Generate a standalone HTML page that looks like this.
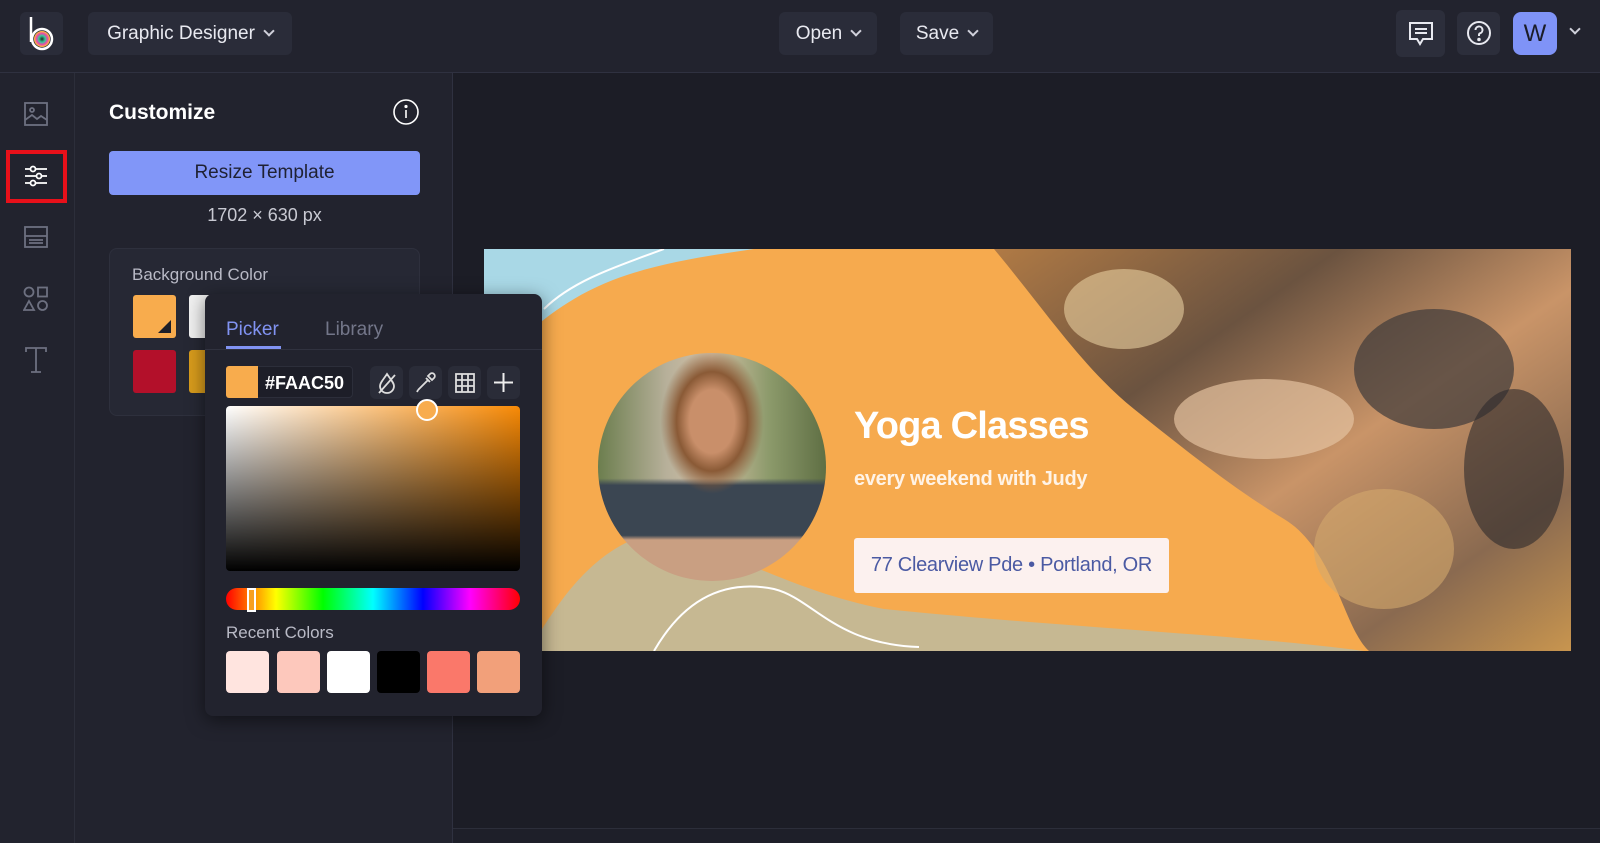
<!DOCTYPE html>
<html><head><meta charset="utf-8"><style>
*{box-sizing:border-box;margin:0;padding:0}
body{width:1600px;height:843px;background:#1c1d26;font-family:"Liberation Sans",sans-serif;position:relative;overflow:hidden;color:#e6e7ee}
.a{position:absolute}
.btn{position:absolute;background:#2a2c39;border-radius:6px;color:#e8e9f0;font-size:19px;display:flex;align-items:center;justify-content:center;gap:10px}
.chev{width:8px;height:8px;border-right:2px solid #cfd0da;border-bottom:2px solid #cfd0da;transform:rotate(45deg);margin-top:-5px}
.ib{position:absolute;background:#2c2e3b;border-radius:6px}
.rs{position:absolute;top:651px;width:43px;height:42px;border-radius:4px}
</style></head><body>
<div class="a" style="left:0;top:0;width:1600px;height:73px;background:#22232e;border-bottom:1px solid #2f3140"></div>
<div class="a" style="left:20px;top:12px;width:43px;height:43px;background:#2a2c39;border-radius:6px"></div>
<svg class="a" style="left:24px;top:14px" width="36" height="38" viewBox="0 0 36 38"><path d="M7 3V28" stroke="#fff" stroke-width="2.5"/><circle cx="18" cy="25" r="10" fill="none" stroke="#fff" stroke-width="2.5"/><circle cx="18" cy="25" r="8" fill="url(#g)"/><defs><radialGradient id="g"><stop offset="0" stop-color="#222"/><stop offset=".4" stop-color="#3c9"/><stop offset=".7" stop-color="#e4a"/><stop offset="1" stop-color="#fc3"/></radialGradient></defs></svg>
<div class="btn" style="left:88px;top:12px;width:204px;height:43px">Graphic Designer <span class="chev"></span></div>
<div class="btn" style="left:779px;top:12px;width:98px;height:43px">Open <span class="chev"></span></div>
<div class="btn" style="left:900px;top:12px;width:93px;height:43px">Save <span class="chev"></span></div>
<div class="ib" style="left:1396px;top:10px;width:49px;height:47px"></div>
<svg class="a" style="left:1408px;top:21px" width="26" height="26" viewBox="0 0 26 26" fill="none" stroke="#e8e9f0" stroke-width="2"><path d="M2 2H24V18H15L12 23L9 18H2Z"/><path d="M7 8H19M7 12H19"/></svg>
<div class="ib" style="left:1457px;top:12px;width:43px;height:43px"></div>
<svg class="a" style="left:1466px;top:20px" width="26" height="26" viewBox="0 0 26 26" fill="none" stroke="#e8e9f0" stroke-width="2"><circle cx="13" cy="13" r="11"/><path d="M9.5 10a3.5 3.5 0 1 1 4.5 3.3c-.8.3-1 .9-1 1.7v1"/><circle cx="13" cy="19.5" r=".8" fill="#e8e9f0"/></svg>
<div class="a" style="left:1513px;top:12px;width:44px;height:43px;background:#7f93f7;border-radius:8px;color:#1b1c28;font-size:24px;display:flex;align-items:center;justify-content:center">W</div>
<div class="chev a" style="left:1571px;top:30px"></div>
<div class="a" style="left:0;top:73px;width:75px;height:770px;background:#22232e;border-right:1px solid #2c2e3a"></div>
<svg class="a" style="left:24px;top:102px" width="24" height="24" viewBox="0 0 24 24" fill="none" stroke="#6d7080" stroke-width="1.8"><rect x="1" y="1" width="22" height="22"/><circle cx="8" cy="8" r="2"/><path d="M1 18L8 13L13 17L17 14L23 18"/></svg>
<div class="a" style="left:6px;top:150px;width:61px;height:53px;border:4px solid #e8101a"></div>
<svg class="a" style="left:24px;top:164px" width="24" height="24" viewBox="0 0 24 24" fill="none" stroke="#fff" stroke-width="1.8"><path d="M1 5H23M1 12H23M1 19H23"/><circle cx="9" cy="5" r="2.5" fill="#22232e"/><circle cx="15" cy="12" r="2.5" fill="#22232e"/><circle cx="9" cy="19" r="2.5" fill="#22232e"/></svg>
<svg class="a" style="left:24px;top:226px" width="24" height="22" viewBox="0 0 24 22" fill="none" stroke="#6d7080" stroke-width="1.8"><rect x="1" y="1" width="22" height="20"/><path d="M1 10H23M5 14H19M5 17H19"/></svg>
<svg class="a" style="left:23px;top:286px" width="26" height="26" viewBox="0 0 26 26" fill="none" stroke="#6d7080" stroke-width="1.8"><circle cx="6" cy="6" r="4.5"/><rect x="15" y="1.5" width="9" height="9"/><path d="M6 15L11 24H1Z"/><circle cx="19.5" cy="19.5" r="4.5"/></svg>
<svg class="a" style="left:24px;top:347px" width="24" height="26" viewBox="0 0 24 26" fill="none" stroke="#6d7080" stroke-width="1.8"><path d="M2 5V1H22V5M12 1V25M7 25H17"/></svg>
<div class="a" style="left:75px;top:73px;width:378px;height:770px;background:#22232e;border-right:1px solid #2f3140"></div>
<div class="a" style="left:109px;top:101px;font-size:21px;font-weight:bold;color:#fff">Customize</div>
<svg class="a" style="left:393px;top:99px" width="26" height="26" viewBox="0 0 26 26" fill="none" stroke="#fff" stroke-width="1.6"><circle cx="13" cy="13" r="12"/><path d="M13 11V19"/><circle cx="13" cy="7.5" r=".8" fill="#fff"/></svg>
<div class="a" style="left:109px;top:151px;width:311px;height:44px;background:#8196f8;border-radius:4px;color:#1f2133;font-size:19px;display:flex;align-items:center;justify-content:center">Resize Template</div>
<div class="a" style="left:109px;top:205px;width:311px;text-align:center;font-size:18px;color:#c8c9d2">1702 × 630 px</div>
<div class="a" style="left:109px;top:248px;width:311px;height:168px;background:#262834;border:1px solid #2e303d;border-radius:8px"></div>
<div class="a" style="left:132px;top:265px;font-size:17px;color:#b9bac6">Background Color</div>
<div class="a" style="left:133px;top:295px;width:43px;height:43px;background:#f8ac4d;border-radius:3px"></div>
<div class="a" style="left:158px;top:320px;width:0;height:0;border-left:13px solid transparent;border-bottom:13px solid #1e1f28"></div>
<div class="a" style="left:189px;top:295px;width:30px;height:43px;background:#f0f0f0;border-radius:3px"></div>
<div class="a" style="left:133px;top:350px;width:43px;height:43px;background:#b3102a;border-radius:3px"></div>
<div class="a" style="left:189px;top:350px;width:30px;height:43px;background:#d79b1c;border-radius:3px"></div>
<div class="a" style="left:453px;top:828px;width:1147px;height:15px;background:#1e1f29;border-top:1px solid #2c2e3a"></div>
<div class="a" style="left:484px;top:249px;width:1087px;height:402px;overflow:hidden;background:#f6aa4e">
 <svg class="a" style="left:0;top:0" width="1087" height="402" viewBox="0 0 1087 402">
  <defs><linearGradient id="ph" x1="0" y1="0" x2="1" y2="1"><stop offset="0" stop-color="#b07a45"/><stop offset=".3" stop-color="#6b5340"/><stop offset=".55" stop-color="#c99468"/><stop offset=".8" stop-color="#8a6a50"/><stop offset="1" stop-color="#c8954f"/></linearGradient></defs>
  <path d="M0 0H270C200 10 140 20 90 50C40 80 20 110 0 130Z" fill="#a9d8e6"/>
  <path d="M60 60C90 30 140 15 180 0" stroke="#fff" stroke-width="2" fill="none"/>
  <path d="M0 320C25 345 45 375 65 402H0Z" fill="#ec7a63"/>
  <path d="M45 402C75 350 110 300 165 285C250 300 300 340 400 360C600 380 750 385 880 402Z" fill="#c6b892"/>
  <path d="M170 402C200 350 240 330 290 340C330 350 350 395 435 398" stroke="#fff" stroke-width="2" fill="none"/>
  <path d="M510 0H1087V402H885C860 380 850 300 800 270C750 240 700 200 650 160C600 120 560 60 510 0Z" fill="url(#ph)"/>
  <ellipse cx="950" cy="120" rx="80" ry="60" fill="#3e3a3a" opacity=".7"/>
  <ellipse cx="780" cy="170" rx="90" ry="40" fill="#e4c2a0" opacity=".7"/>
  <ellipse cx="1030" cy="220" rx="50" ry="80" fill="#2d2a2c" opacity=".6"/>
  <ellipse cx="900" cy="300" rx="70" ry="60" fill="#d4a96d" opacity=".6"/>
  <ellipse cx="640" cy="60" rx="60" ry="40" fill="#e8cfa0" opacity=".6"/>
 </svg>
 <div class="a" style="left:114px;top:104px;width:228px;height:228px;border-radius:50%;background:radial-gradient(ellipse at 50% 30%,#c98f6a 0 14%,#8a5a36 22%,transparent 32%),linear-gradient(180deg,transparent 55%,#3b4652 58%,#3b4652 80%,#c99f82 82%),linear-gradient(90deg,#6c7e4e,#b7b09a 30%,#d4c1a6 50%,#8c9a6b 75%,#5f6f44)"></div>
 <div class="a" style="left:370px;top:156px;font-size:38px;font-weight:bold;color:#fff;letter-spacing:-0.8px">Yoga Classes</div>
 <div class="a" style="left:370px;top:219px;font-size:20px;font-weight:bold;color:#fff3e6;letter-spacing:-0.3px">every weekend with Judy</div>
 <div class="a" style="left:370px;top:289px;width:315px;height:55px;background:#fcf1ef;border-radius:3px;color:#4b5aa3;font-size:20px;display:flex;align-items:center;justify-content:center;letter-spacing:-0.3px">77 Clearview Pde • Portland, OR</div>
</div>
<div class="a" style="left:205px;top:294px;width:337px;height:422px;background:#22232e;border-radius:8px;box-shadow:0 4px 18px rgba(0,0,0,.5)"></div>
<div class="a" style="left:226px;top:319px;font-size:19px;color:#8193f2">Picker</div>
<div class="a" style="left:325px;top:319px;font-size:19px;color:#737689">Library</div>
<div class="a" style="left:205px;top:349px;width:337px;height:1px;background:#30323f"></div>
<div class="a" style="left:226px;top:346px;width:55px;height:3px;background:#8193f2"></div>
<div class="a" style="left:226px;top:366px;width:127px;height:32px;background:#1d1e28;border:1px solid #2c2e3a;border-radius:4px"></div>
<div class="a" style="left:226px;top:366px;width:32px;height:32px;background:#f8ac4d;border-radius:3px 0 0 3px"></div>
<div class="a" style="left:265px;top:373px;font-size:18px;color:#fff;font-weight:bold">#FAAC50</div>
<div class="ib" style="left:370px;top:366px;width:33px;height:33px;background:#2a2c38"></div>
<div class="ib" style="left:409px;top:366px;width:33px;height:33px;background:#2a2c38"></div>
<div class="ib" style="left:448px;top:366px;width:33px;height:33px;background:#2a2c38"></div>
<div class="ib" style="left:487px;top:366px;width:33px;height:33px;background:#2a2c38"></div>
<svg class="a" style="left:377px;top:372px" width="20" height="22" viewBox="0 0 20 22" fill="none" stroke="#ddd" stroke-width="1.8"><path d="M10 2C6 8 3 11 3 14a7 7 0 0 0 14 0C17 11 14 8 10 2Z"/><path d="M2 21L18 3"/></svg>
<svg class="a" style="left:415px;top:372px" width="21" height="21" viewBox="0 0 21 21" fill="none" stroke="#ddd" stroke-width="1.8"><path d="M3 18L13 8M11 6L15 10"/><path d="M13 4l4 4 2-2a2.5 2.5 0 0 0-4-4Z"/><path d="M3 18l-1 2"/></svg>
<svg class="a" style="left:455px;top:373px" width="20" height="20" viewBox="0 0 20 20" fill="none" stroke="#ddd" stroke-width="1.8"><rect x="1" y="1" width="18" height="18"/><path d="M7 1V19M13 1V19M1 7H19M1 13H19"/></svg>
<svg class="a" style="left:493px;top:372px" width="21" height="21" viewBox="0 0 21 21" fill="none" stroke="#eee" stroke-width="2"><path d="M10.5 1V20M1 10.5H20"/></svg>
<div class="a" style="left:226px;top:406px;width:294px;height:165px;border-radius:4px;background:linear-gradient(0deg,#000,rgba(0,0,0,0)),linear-gradient(90deg,#fff,#f88a06)"></div>
<div class="a" style="left:416px;top:399px;width:22px;height:22px;border-radius:50%;background:#f8ac4d;border:2px solid #fff"></div>
<div class="a" style="left:226px;top:588px;width:294px;height:22px;border-radius:11px;background:linear-gradient(90deg,#f00,#ff0 17%,#0f0 33%,#0ff 50%,#00f 67%,#f0f 83%,#f00)"></div>
<div class="a" style="left:247px;top:588px;width:9px;height:24px;border:2px solid #fff;background:#f7a020"></div>
<div class="a" style="left:226px;top:623px;font-size:17px;color:#b9bac6">Recent Colors</div>
<div class="rs" style="left:226px;background:#ffe4df"></div>
<div class="rs" style="left:277px;background:#fdc8bc"></div>
<div class="rs" style="left:327px;background:#fff"></div>
<div class="rs" style="left:377px;background:#000"></div>
<div class="rs" style="left:427px;background:#fa786a"></div>
<div class="rs" style="left:477px;background:#f2a07a"></div>
</body></html>
